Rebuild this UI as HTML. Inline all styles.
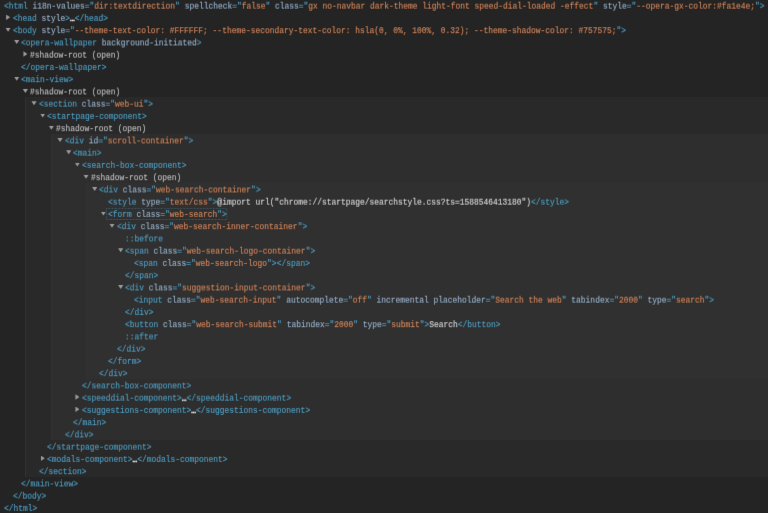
<!DOCTYPE html>
<html><head><meta charset="utf-8"><title>Elements</title>
<style>
html,body{margin:0;padding:0;}
body{width:768px;height:513px;overflow:hidden;background:#242424;position:relative;font-family:"Liberation Mono",monospace;}
.L{position:absolute;left:0;top:0;width:768px;height:513px;}
.sr{position:absolute;right:0;box-sizing:border-box;}
.s1{background:#292929;border-left:1px solid #313131}.s2{background:#2e2e2e;border-left:1px solid #313131}.s3{background:#303030;border-left:1px solid #333}
.r{position:absolute;left:0;white-space:pre;transform-origin:0 50%;transform:scaleX(0.92141);-webkit-text-stroke:0.14px currentColor;font-size:8.600px;height:12px;line-height:12px;color:#d4d4d4;}
.e{color:#f0f0f0;-webkit-text-stroke:0.5px #f0f0f0}
.t{color:#4d9dc2}.n{color:#96b0ca}.v{color:#d28459}.x{color:#d4d4d4}.s{color:#bdbdbd}
.a{position:absolute;background:#9c9c9c;}
.ad{width:5.2px;height:4.0px;clip-path:polygon(0 0,100% 0,50% 100%);}
.ar{width:4.0px;height:5.5px;clip-path:polygon(0 0,100% 50%,0 100%);}
.fo{position:absolute;overflow:visible;}
</style></head><body>
<div class="sr s1" style="left:25.26px;top:97.05px;height:379.75px"></div>
<div class="sr s2" style="left:51.25px;top:133.80px;height:306.25px"></div>
<div class="sr s3" style="left:85.91px;top:182.80px;height:196.00px"></div>
<svg width="0" height="0" style="position:absolute">
<filter id="f0" x="0" y="0" width="100%" height="100%" color-interpolation-filters="sRGB"><feConvolveMatrix order="3 3" divisor="1" edgeMode="none" preserveAlpha="false" kernelMatrix="0.0225 0.2657 0.0225  0.0491 0.5805 0.0491  0.0008 0.0091 0.0008"/></filter>
<filter id="f1" x="0" y="0" width="100%" height="100%" color-interpolation-filters="sRGB"><feConvolveMatrix order="3 3" divisor="1" edgeMode="none" preserveAlpha="false" kernelMatrix="0.0073 0.0864 0.0073  0.0614 0.7252 0.0614  0.0037 0.0436 0.0037"/></filter>
<filter id="f2" x="0" y="0" width="100%" height="100%" color-interpolation-filters="sRGB"><feConvolveMatrix order="3 3" divisor="1" edgeMode="none" preserveAlpha="false" kernelMatrix="0.0014 0.0163 0.0014  0.0552 0.6517 0.0552  0.0159 0.1873 0.0159"/></filter>
<filter id="f3" x="0" y="0" width="100%" height="100%" color-interpolation-filters="sRGB"><feConvolveMatrix order="3 3" divisor="1" edgeMode="none" preserveAlpha="false" kernelMatrix="0.0003 0.0039 0.0003  0.0392 0.4625 0.0392  0.0329 0.3888 0.0329"/></filter>
<filter id="fa" x="0" y="0" width="100%" height="100%" color-interpolation-filters="sRGB"><feConvolveMatrix order="3 3" divisor="1" edgeMode="none" preserveAlpha="false" kernelMatrix="0.0052 0.0619 0.0052  0.0619 0.7314 0.0619  0.0052 0.0619 0.0052"/></filter>
</svg>
<div class="L" style="filter:url(#f0)">
<div class="r" style="left:4.05px;top:1px"><span class="t">&lt;html</span> <span class="n">i18n-values</span><span class="t">="</span><span class="v">dir:textdirection</span><span class="t">"</span> <span class="n">spellcheck</span><span class="t">="</span><span class="v">false</span><span class="t">"</span> <span class="n">class</span><span class="t">="</span><span class="v">gx no-navbar dark-theme light-font speed-dial-loaded -effect</span><span class="t">"</span> <span class="n">style</span><span class="t">="</span><span class="v">--opera-gx-color:#fa1e4e;</span><span class="t">"</span><span class="t">&gt;</span></div>
<div class="r" style="left:30.04px;top:50px"><span class="s">#shadow-root (open)</span></div>
<div class="r" style="left:38.71px;top:99px"><span class="t">&lt;section</span> <span class="n">class</span><span class="t">="</span><span class="v">web-ui</span><span class="t">"</span><span class="t">&gt;</span></div>
<div class="r" style="left:73.36px;top:148px"><span class="t">&lt;main</span><span class="t">&gt;</span></div>
<div class="r" style="left:108.02px;top:197px"><span class="t">&lt;style</span> <span class="n">type</span><span class="t">="</span><span class="v">text/css</span><span class="t">"</span><span class="t">&gt;</span><span class="x">@import url("chrome://startpage/searchstyle.css?ts=1588546413180")</span><span class="t">&lt;/style</span><span class="t">&gt;</span></div>
<div class="r" style="left:125.35px;top:246px"><span class="t">&lt;span</span> <span class="n">class</span><span class="t">="</span><span class="v">web-search-logo-container</span><span class="t">"</span><span class="t">&gt;</span></div>
<div class="r" style="left:134.01px;top:295px"><span class="t">&lt;input</span> <span class="n">class</span><span class="t">="</span><span class="v">web-search-input</span><span class="t">"</span> <span class="n">autocomplete</span><span class="t">="</span><span class="v">off</span><span class="t">"</span> <span class="n">incremental</span> <span class="n">placeholder</span><span class="t">="</span><span class="v">Search the web</span><span class="t">"</span> <span class="n">tabindex</span><span class="t">="</span><span class="v">2000</span><span class="t">"</span> <span class="n">type</span><span class="t">="</span><span class="v">search</span><span class="t">"</span><span class="t">&gt;</span></div>
<div class="r" style="left:116.68px;top:344px"><span class="t">&lt;/div</span><span class="t">&gt;</span></div>
<div class="r" style="left:82.03px;top:393px"><span class="t">&lt;speeddial-component</span><span class="t">&gt;</span><span class="x"><span class="e">…</span></span><span class="t">&lt;/speeddial-component</span><span class="t">&gt;</span></div>
<div class="r" style="left:47.37px;top:442px"><span class="t">&lt;/startpage-component</span><span class="t">&gt;</span></div>
<div class="r" style="left:12.71px;top:491px"><span class="t">&lt;/body</span><span class="t">&gt;</span></div>
</div>
<div class="L" style="filter:url(#f1)">
<div class="r" style="left:12.71px;top:13px"><span class="t">&lt;head</span> <span class="n">style</span><span class="t">&gt;</span><span class="x"><span class="e">…</span></span><span class="t">&lt;/head</span><span class="t">&gt;</span></div>
<div class="r" style="left:21.38px;top:62px"><span class="t">&lt;/opera-wallpaper</span><span class="t">&gt;</span></div>
<div class="r" style="left:47.37px;top:111px"><span class="t">&lt;startpage-component</span><span class="t">&gt;</span></div>
<div class="r" style="left:82.03px;top:160px"><span class="t">&lt;search-box-component</span><span class="t">&gt;</span></div>
<div class="r" style="left:108.02px;top:209px"><span class="t">&lt;form</span> <span class="n">class</span><span class="t">="</span><span class="v">web-search</span><span class="t">"</span><span class="t">&gt;</span></div>
<div class="r" style="left:134.01px;top:258px"><span class="t">&lt;span</span> <span class="n">class</span><span class="t">="</span><span class="v">web-search-logo</span><span class="t">"</span><span class="t">&gt;</span><span class="t">&lt;/span</span><span class="t">&gt;</span></div>
<div class="r" style="left:125.35px;top:307px"><span class="t">&lt;/div</span><span class="t">&gt;</span></div>
<div class="r" style="left:108.02px;top:356px"><span class="t">&lt;/form</span><span class="t">&gt;</span></div>
<div class="r" style="left:82.03px;top:405px"><span class="t">&lt;suggestions-component</span><span class="t">&gt;</span><span class="x"><span class="e">…</span></span><span class="t">&lt;/suggestions-component</span><span class="t">&gt;</span></div>
<div class="r" style="left:47.37px;top:454px"><span class="t">&lt;modals-component</span><span class="t">&gt;</span><span class="x"><span class="e">…</span></span><span class="t">&lt;/modals-component</span><span class="t">&gt;</span></div>
<div class="r" style="left:4.05px;top:503px"><span class="t">&lt;/html</span><span class="t">&gt;</span></div>
</div>
<div class="L" style="filter:url(#f2)">
<div class="r" style="left:12.71px;top:25px"><span class="t">&lt;body</span> <span class="n">style</span><span class="t">="</span><span class="v">--theme-text-color: #FFFFFF; --theme-secondary-text-color: hsla(0, 0%, 100%, 0.32); --theme-shadow-color: #757575;</span><span class="t">"</span><span class="t">&gt;</span></div>
<div class="r" style="left:21.38px;top:74px"><span class="t">&lt;main-view</span><span class="t">&gt;</span></div>
<div class="r" style="left:56.03px;top:123px"><span class="s">#shadow-root (open)</span></div>
<div class="r" style="left:90.69px;top:172px"><span class="s">#shadow-root (open)</span></div>
<div class="r" style="left:116.68px;top:221px"><span class="t">&lt;div</span> <span class="n">class</span><span class="t">="</span><span class="v">web-search-inner-container</span><span class="t">"</span><span class="t">&gt;</span></div>
<div class="r" style="left:125.35px;top:270px"><span class="t">&lt;/span</span><span class="t">&gt;</span></div>
<div class="r" style="left:125.35px;top:319px"><span class="t">&lt;button</span> <span class="n">class</span><span class="t">="</span><span class="v">web-search-submit</span><span class="t">"</span> <span class="n">tabindex</span><span class="t">="</span><span class="v">2000</span><span class="t">"</span> <span class="n">type</span><span class="t">="</span><span class="v">submit</span><span class="t">"</span><span class="t">&gt;</span><span class="x">Search</span><span class="t">&lt;/button</span><span class="t">&gt;</span></div>
<div class="r" style="left:99.35px;top:368px"><span class="t">&lt;/div</span><span class="t">&gt;</span></div>
<div class="r" style="left:73.36px;top:417px"><span class="t">&lt;/main</span><span class="t">&gt;</span></div>
<div class="r" style="left:38.71px;top:466px"><span class="t">&lt;/section</span><span class="t">&gt;</span></div>
</div>
<div class="L" style="filter:url(#f3)">
<div class="r" style="left:21.38px;top:37px"><span class="t">&lt;opera-wallpaper</span> <span class="n">background-initiated</span><span class="t">&gt;</span></div>
<div class="r" style="left:30.04px;top:86px"><span class="s">#shadow-root (open)</span></div>
<div class="r" style="left:64.70px;top:135px"><span class="t">&lt;div</span> <span class="n">id</span><span class="t">="</span><span class="v">scroll-container</span><span class="t">"</span><span class="t">&gt;</span></div>
<div class="r" style="left:99.35px;top:184px"><span class="t">&lt;div</span> <span class="n">class</span><span class="t">="</span><span class="v">web-search-container</span><span class="t">"</span><span class="t">&gt;</span></div>
<div class="r" style="left:125.35px;top:233px"><span class="t">::before</span></div>
<div class="r" style="left:125.35px;top:282px"><span class="t">&lt;div</span> <span class="n">class</span><span class="t">="</span><span class="v">suggestion-input-container</span><span class="t">"</span><span class="t">&gt;</span></div>
<div class="r" style="left:125.35px;top:331px"><span class="t">::after</span></div>
<div class="r" style="left:82.03px;top:380px"><span class="t">&lt;/search-box-component</span><span class="t">&gt;</span></div>
<div class="r" style="left:64.70px;top:429px"><span class="t">&lt;/div</span><span class="t">&gt;</span></div>
<div class="r" style="left:21.38px;top:478px"><span class="t">&lt;/main-view</span><span class="t">&gt;</span></div>
</div>
<div class="L" style="filter:url(#fa)">
<div class="a ar" style="left:6.11px;top:14.60px"></div>
<div class="a ad" style="left:5.46px;top:27.75px"></div>
<div class="a ad" style="left:14.13px;top:40.00px"></div>
<div class="a ar" style="left:23.44px;top:51.35px"></div>
<div class="a ad" style="left:14.13px;top:76.75px"></div>
<div class="a ad" style="left:22.79px;top:89.00px"></div>
<div class="a ad" style="left:31.46px;top:101.25px"></div>
<div class="a ad" style="left:40.12px;top:113.50px"></div>
<div class="a ad" style="left:48.78px;top:125.75px"></div>
<div class="a ad" style="left:57.45px;top:138.00px"></div>
<div class="a ad" style="left:66.11px;top:150.25px"></div>
<div class="a ad" style="left:74.78px;top:162.50px"></div>
<div class="a ad" style="left:83.44px;top:174.75px"></div>
<div class="a ad" style="left:92.10px;top:187.00px"></div>
<div class="a ad" style="left:100.77px;top:211.50px"></div>
<div class="a ad" style="left:109.43px;top:223.75px"></div>
<div class="a ad" style="left:118.10px;top:248.25px"></div>
<div class="a ad" style="left:118.10px;top:285.00px"></div>
<div class="a ar" style="left:75.43px;top:394.35px"></div>
<div class="a ar" style="left:75.43px;top:406.60px"></div>
<div class="a ar" style="left:40.77px;top:455.60px"></div>
</div>
<svg class="fo" style="left:105.92px;top:208.10px" width="121.45" height="12.20"><rect x="0.4" y="0.4" width="120.45" height="11.10" fill="none" stroke="#5a8ca6" stroke-opacity="0.6" stroke-width="0.75" stroke-dasharray="0.72 0.72"/></svg>
</body></html>
